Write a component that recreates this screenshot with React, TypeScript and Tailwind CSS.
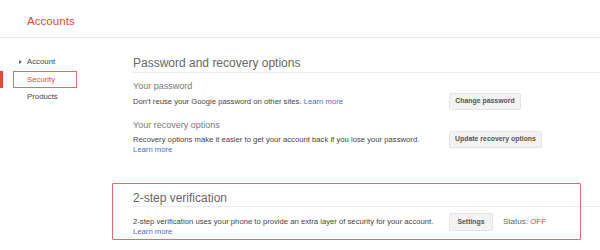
export default function App() {
  return (
    <div className="w-[600px] h-[250px] bg-white overflow-hidden font-['Liberation_Sans',Arial,sans-serif] text-[#333]">
      {/* HEADER */}
      <div className="h-[38px] border-b border-[#e8e8e8] pl-[27px] pt-[8px]">
        <span className="text-[11.6px] leading-[16px] text-[#dd4b39]">Accounts</span>
      </div>

      <div className="flex">
        {/* SIDEBAR */}
        <div className="w-[133px] shrink-0 pt-[15px] text-[7.8px]">
          <div className="flex items-center h-[17px] pl-[19px] text-[#444]">
            <span className="w-0 h-0 border-y-[2.5px] border-y-transparent border-l-[3px] border-l-[#666] mr-[5px]" />
            Account
          </div>
          <div className="flex items-center h-[17px] mt-[1px]">
            <span className="w-[3px] h-full bg-[#dd4b39]" />
            <span className="ml-[10px] w-[64px] h-full flex items-center pl-[13px] border border-[#e36a6a] text-[#dd4b39]">
              Security
            </span>
          </div>
          <div className="flex items-center h-[18px] pl-[27px] text-[#444]">Products</div>
        </div>

        {/* CONTENT */}
        <div className="flex-1">
          <div className="mt-[18px] h-[17px] border-b border-[#ebebeb] text-[12px] leading-[14px] text-[#666]">
            Password and recovery options
          </div>

          {/* YOUR PASSWORD */}
          <div className="mt-[8px] text-[9px] leading-[11px] text-[#777]">Your password</div>
          <div className="mt-[1px] flex items-center h-[17px]">
            <p className="w-[316px] text-[7.7px] leading-[10px] text-[#444]">
              Don&apos;t reuse your Google password on other sites.{" "}
              <span className="text-[#4a6fc4]">Learn more</span>
            </p>
            <button className="w-[72px] h-[17px] bg-[#f3f3f3] border border-[#e3e3e3] rounded-[2px] text-[6.9px] font-bold text-[#555]">
              Change password
            </button>
          </div>

          {/* RECOVERY */}
          <div className="mt-[10px] text-[9px] leading-[11px] text-[#777]">Your recovery options</div>
          <div className="flex items-start">
            <p className="w-[316px] pt-[3.5px] text-[7.7px] leading-[10.4px] text-[#444]">
              Recovery options make it easier to get your account back if you lose your password.
              <br />
              <span className="text-[#4a6fc4]">Learn more</span>
            </p>
            <button className="w-[93px] h-[17px] bg-[#f3f3f3] border border-[#e3e3e3] rounded-[2px] text-[6.9px] font-bold text-[#555]">
              Update recovery options
            </button>
          </div>

          {/* 2-STEP */}
          <div className="relative mt-[36px]">
            <div className="h-[16px] border-b border-[#ebebeb] text-[12px] leading-[14px] text-[#666]">
              2-step verification
            </div>
            <div className="mt-[6px] flex items-start">
              <p className="w-[316px] pt-[3.5px] text-[7.7px] leading-[10.6px] text-[#444]">
                2-step verification uses your phone to provide an extra layer of security for your account.
                <br />
                <span className="text-[#4a6fc4]">Learn more</span>
              </p>
              <div className="flex items-center gap-[10px]">
                <button className="w-[44px] h-[18px] bg-[#f3f3f3] border border-[#e3e3e3] rounded-[2px] text-[6.9px] font-bold text-[#555]">
                  Settings
                </button>
                <span className="text-[8px] text-[#666]">
                  Status: <span className="text-[#dd4b39]">OFF</span>
                </span>
              </div>
            </div>
            {/* highlight frame */}
            <div className="absolute left-[-21px] top-[-8px] w-[469px] h-[57px] border border-[#e36a6a] rounded-[1px] pointer-events-none" />
          </div>
        </div>
      </div>
    </div>
  );
}
